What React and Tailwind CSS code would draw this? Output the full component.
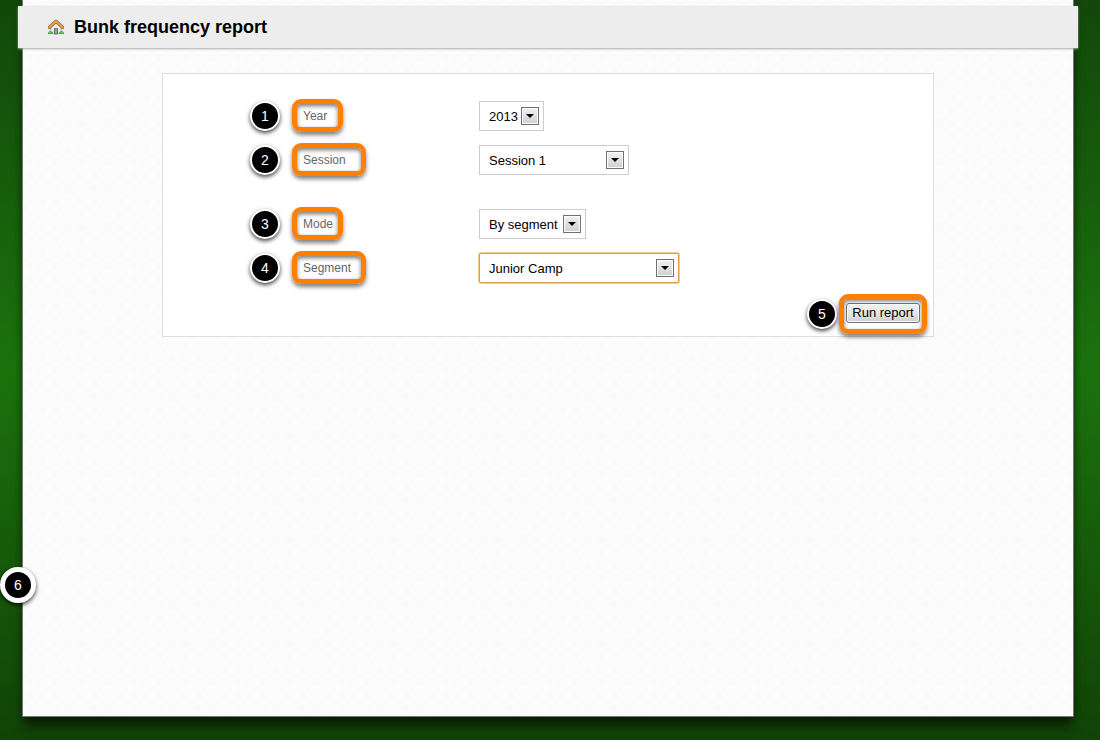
import { useState } from "react";

const badgeClass =
  "flex items-center justify-center rounded-full bg-black text-white text-sm leading-none shadow-[0_2px_4px_rgba(0,0,0,0.75)]";

const highlightClass =
  "rounded-[9px] border-[5px] border-[#ff8000] shadow-[0_3px_4px_rgba(0,0,0,0.5),inset_0_2px_4px_rgba(0,0,0,0.55)]";

const groups = [
  [
    { step: 1, id: "year", label: "Year", options: ["2013", "2012"], labelWidth: "w-[51px]", width: "w-[65px]" },
    { step: 2, id: "session", label: "Session", options: ["Session 1", "Session 2"], labelWidth: "w-[74px]", width: "w-[150px]" },
  ],
  [
    { step: 3, id: "mode", label: "Mode", options: ["By segment", "By bunk"], labelWidth: "w-[51px]", width: "w-[107px]" },
    { step: 4, id: "segment", label: "Segment", options: ["Junior Camp", "Senior Camp"], labelWidth: "w-[74px]", width: "w-[200px]", active: true },
  ],
];

const HomeIcon = () => (
  <svg className="w-4 h-4 shrink-0" viewBox="0 0 16 16" aria-hidden="true">
    <path d="M3 7.500 8 3l5 4.500V14.500H3z" fill="#efefed" stroke="#b4b4b2" />
    <path d="M6.500 9.500h3V15h-3z" fill="#a0a0a0" stroke="#6b6b6b" />
    <path
      d="M1.500 8.300 8 2.300l6.500 6"
      fill="none"
      stroke="#a86e30"
      strokeWidth="3.400"
      strokeLinejoin="round"
      strokeLinecap="round"
    />
    <path
      d="M1.500 8.200 8 2.200l6.500 6"
      fill="none"
      stroke="#e0a55c"
      strokeWidth="1.800"
      strokeLinejoin="round"
      strokeLinecap="round"
    />
    <path d="M0 15c0-2 1-3 2.400-3S5 13 5.200 15z" fill="#4fa64c" />
    <path d="M10.800 15c.2-2 1.200-3 2.600-3S16 13 16 15z" fill="#4fa64c" />
    <path d="M1.500 13.500H3M12.800 13.500h1.500" stroke="#8fd083" />
  </svg>
);

const PagePattern = () => (
  <svg className="absolute inset-0 w-full h-full" aria-hidden="true">
    <defs>
      <pattern id="tiles" width="26" height="26" patternUnits="userSpaceOnUse">
        <path
          d="M4 1h5l3 3v5l-3 3H4L1 9V4zM17 14h5l3 3v5l-3 3h-5l-3-3v-5zM12 4l5-3h5l3 3M1 17v5l3 3h5l5-3M12 9l2 5M4 12l-3 5"
          fill="none"
          stroke="#fefefe"
        />
        <path
          d="M5 5l3 3M8 5 5 8M18 5l3 3M21 5l-3 3M5 18l3 3M8 18l-3 3M18 18l3 3M21 18l-3 3"
          fill="none"
          stroke="#f8f8f8"
        />
      </pattern>
    </defs>
    <rect width="100%" height="100%" fill="url(#tiles)" />
  </svg>
);

const SelectField = ({ field }) => {
  const [value, setValue] = useState(field.options[0]);

  return (
    <div className="flex items-center">
      <div className="w-[42px] shrink-0">
        <span className={`${badgeClass} w-[30px] h-[30px] border-2 border-white`}>{field.step}</span>
      </div>
      <div className="w-[187px] shrink-0">
        <label
          htmlFor={field.id}
          className={`${highlightClass} ${field.labelWidth} flex items-center h-[33px] pl-1.5 text-xs text-[#666]`}
        >
          {field.label}
        </label>
      </div>
      <div className={`relative ${field.width}`}>
        <select
          id={field.id}
          value={value}
          onChange={(e) => setValue(e.target.value)}
          className={`block w-full h-[30px] pt-0.5 pl-[9px] appearance-none border bg-white text-[13px] text-black outline-none ${
            field.active ? "border-[#dca04a] rounded-xs shadow-[0_0_0_1px_#f3cf8e]" : "border-[#ccc]"
          }`}
        >
          {field.options.map((option) => (
            <option key={option}>{option}</option>
          ))}
        </select>
        <span className="absolute right-[5px] top-1.5 flex items-center justify-center w-[18px] h-[18px] border border-[#707070] bg-linear-to-b from-[#f2f2f2] to-[#cfcfcf] shadow-[inset_0_0_0_1px_#fcfcfc] pointer-events-none">
          <svg width="8" height="4" viewBox="0 0 8 4" aria-hidden="true">
            <path d="M0 0h8L4 4z" fill="#000" />
          </svg>
        </span>
      </div>
    </div>
  );
};

const App = () => {
  return (
    <div
      className="relative min-h-screen flex flex-col pl-[22px] pr-[26px] pb-[23px] bg-linear-to-b from-[#12480a] via-[#1b730d] to-[#114307] text-black"
      style={{ fontFamily: '"Liberation Sans", Arial, sans-serif' }}
    >
      <main className="relative flex-1 flex flex-col border-x border-b border-[#777] bg-[#fbfbfb] shadow-[0_12px_10px_-2px_rgba(0,0,0,0.5),0_0_6px_rgba(0,0,0,0.3)]">
        <PagePattern />
        <header className="relative mt-1.5 -mx-[5px] h-[42px] flex items-center gap-2.5 pl-[30px] bg-[#ededed] shadow-[0_1px_2px_#aaa]">
          <HomeIcon />
          <h1 className="text-lg font-bold">Bunk frequency report</h1>
        </header>

        <form
          onSubmit={(e) => e.preventDefault()}
          className="relative w-full max-w-[772px] mx-auto mt-[25px] border border-[#ddd] bg-white pt-[25px] pb-0.5"
        >
          <div className="flex flex-col gap-[31px] pl-[87px]">
            {groups.map((fields, index) => (
              <div key={index} className="flex flex-col gap-[11px]">
                {fields.map((field) => (
                  <SelectField key={field.id} field={field} />
                ))}
              </div>
            ))}
          </div>
          <div className="flex items-center justify-end gap-0.5 mt-[10px] pr-1.5">
            <span className={`${badgeClass} w-[30px] h-[30px] border-2 border-white`}>5</span>
            <div className={`${highlightClass} w-[88px] h-[40px] flex justify-center pt-1`}>
              <button
                type="submit"
                className="w-[74px] h-5 flex items-center justify-center rounded-[3px] border border-[#707070] bg-linear-to-b from-[#f2f2f2] via-[#e6e6e6] to-[#cfcfcf] shadow-[inset_0_0_0_1px_#fcfcfc] text-[13px] whitespace-nowrap"
              >
                Run report
              </button>
            </div>
          </div>
        </form>
      </main>
      <span className={`${badgeClass} absolute left-0 top-[567px] w-9 h-9 border-5 border-white`}>6</span>
    </div>
  );
};

export default App;
